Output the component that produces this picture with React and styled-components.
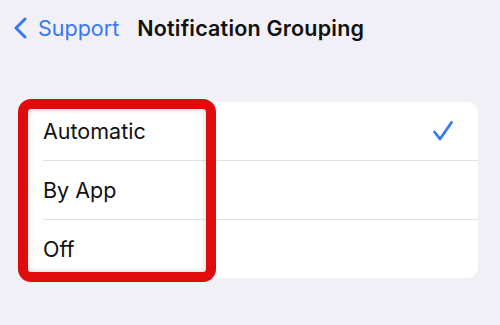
import styled, { createGlobalStyle } from "styled-components";

const GlobalStyle = createGlobalStyle`
  html, body {
    margin: 0;
    padding: 0;
    background: #f1f0f6;
    font-family: Inter, "Noto Sans", "Liberation Sans", sans-serif;
  }
`;

const Page = styled.div`
  width: 500px;
  height: 325px;
  background: #f1f0f6;
  overflow: hidden;
`;

const NavBar = styled.div`
  height: 52px;
  display: flex;
  align-items: center;
  padding: 4px 0 0 12px;
  box-sizing: border-box;
`;

const BackButton = styled.div`
  display: flex;
  align-items: center;
  gap: 10px;
  color: #3478f6;
  font-size: 21.5px;
`;

const Title = styled.div`
  margin-left: 18px;
  font-size: 21.5px;
  font-weight: 600;
  letter-spacing: 0.2px;
  color: #111;
`;

const Section = styled.div`
  position: relative;
  margin: 50px 22px 0;
`;

const Card = styled.div`
  background: #fff;
  border-radius: 11px;
  overflow: hidden;
`;

const Row = styled.div`
  height: 58px;
  display: flex;
  align-items: center;
  justify-content: space-between;
  margin-left: 21px;
  padding-right: 24px;
  border-top: ${(p) => (p.first ? "none" : "1px solid #e2e2e6")};
  font-size: 21.5px;
  color: #111;
`;

const Highlight = styled.div`
  position: absolute;
  left: -4px;
  top: -3px;
  width: 198px;
  height: 183px;
  box-sizing: border-box;
  border: 10px solid #e00b0b;
  border-radius: 13px;
  box-shadow: inset 0 0 6px rgba(0, 0, 0, 0.18);
  pointer-events: none;
`;

const Chevron = () => (
  <svg width="16" height="22" viewBox="0 0 16 22" fill="none">
    <path
      d="M13 2 L4 11 L13 20"
      stroke="#3478f6"
      strokeWidth="3"
      strokeLinecap="round"
      strokeLinejoin="round"
    />
  </svg>
);

const Check = () => (
  <svg width="22" height="22" viewBox="0 0 22 22" fill="none">
    <path
      d="M2.5 12 L8 19 L19.5 2.5"
      stroke="#3478f6"
      strokeWidth="2.8"
      strokeLinecap="round"
      strokeLinejoin="round"
    />
  </svg>
);

const options = ["Automatic", "By App", "Off"];

const App = () => {
  return (
    <Page>
      <GlobalStyle />
      <NavBar>
        <BackButton>
          <Chevron />
          Support
        </BackButton>
        <Title>Notification Grouping</Title>
      </NavBar>
      <Section>
        <Card>
          {options.map((o, i) => (
            <Row key={o} first={i === 0}>
              {o}
              {i === 0 && <Check />}
            </Row>
          ))}
        </Card>
        <Highlight />
      </Section>
    </Page>
  );
};

export default App;
